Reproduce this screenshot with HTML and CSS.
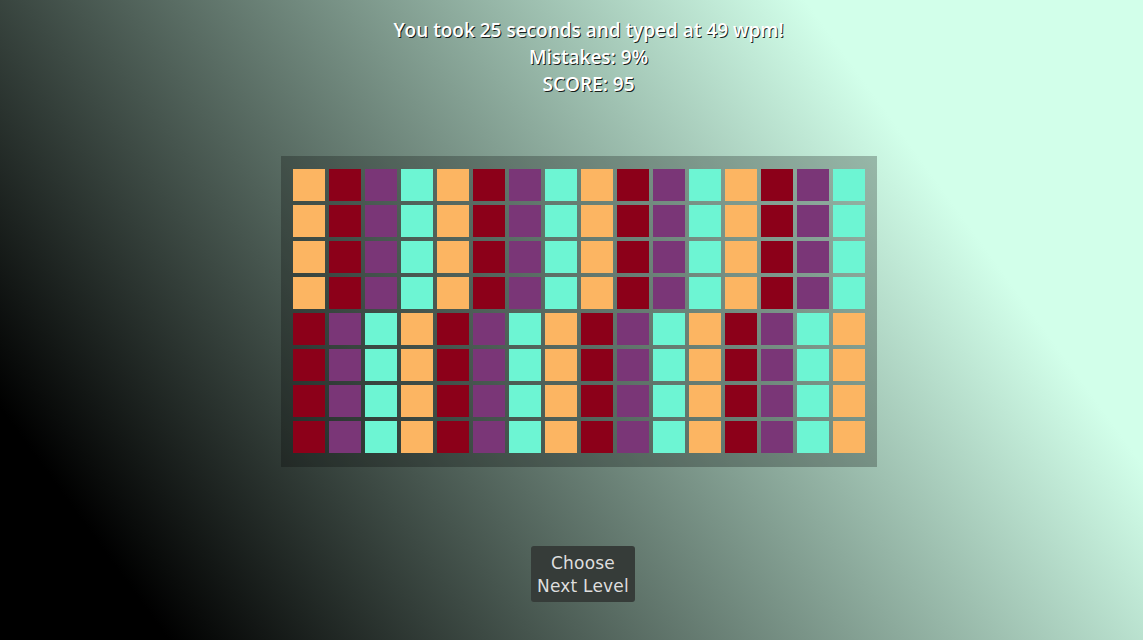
FILE: index.html
```html
<!DOCTYPE html>
<html>
<head>
<meta charset="utf-8">
<link rel="stylesheet" href="styles.css">
</head>
<body>
<div class="page">
  <div class="results">
    <div>You took 25 seconds and typed at 49 wpm!</div>
    <div>Mistakes: 9%</div>
    <div>SCORE: 95</div>
  </div>
  <div class="board">
    <div class="c o"></div><div class="c r"></div><div class="c p"></div><div class="c m"></div>
    <div class="c o"></div><div class="c r"></div><div class="c p"></div><div class="c m"></div>
    <div class="c o"></div><div class="c r"></div><div class="c p"></div><div class="c m"></div>
    <div class="c o"></div><div class="c r"></div><div class="c p"></div><div class="c m"></div>

    <div class="c o"></div><div class="c r"></div><div class="c p"></div><div class="c m"></div>
    <div class="c o"></div><div class="c r"></div><div class="c p"></div><div class="c m"></div>
    <div class="c o"></div><div class="c r"></div><div class="c p"></div><div class="c m"></div>
    <div class="c o"></div><div class="c r"></div><div class="c p"></div><div class="c m"></div>

    <div class="c o"></div><div class="c r"></div><div class="c p"></div><div class="c m"></div>
    <div class="c o"></div><div class="c r"></div><div class="c p"></div><div class="c m"></div>
    <div class="c o"></div><div class="c r"></div><div class="c p"></div><div class="c m"></div>
    <div class="c o"></div><div class="c r"></div><div class="c p"></div><div class="c m"></div>

    <div class="c o"></div><div class="c r"></div><div class="c p"></div><div class="c m"></div>
    <div class="c o"></div><div class="c r"></div><div class="c p"></div><div class="c m"></div>
    <div class="c o"></div><div class="c r"></div><div class="c p"></div><div class="c m"></div>
    <div class="c o"></div><div class="c r"></div><div class="c p"></div><div class="c m"></div>

    <div class="c r"></div><div class="c p"></div><div class="c m"></div><div class="c o"></div>
    <div class="c r"></div><div class="c p"></div><div class="c m"></div><div class="c o"></div>
    <div class="c r"></div><div class="c p"></div><div class="c m"></div><div class="c o"></div>
    <div class="c r"></div><div class="c p"></div><div class="c m"></div><div class="c o"></div>

    <div class="c r"></div><div class="c p"></div><div class="c m"></div><div class="c o"></div>
    <div class="c r"></div><div class="c p"></div><div class="c m"></div><div class="c o"></div>
    <div class="c r"></div><div class="c p"></div><div class="c m"></div><div class="c o"></div>
    <div class="c r"></div><div class="c p"></div><div class="c m"></div><div class="c o"></div>

    <div class="c r"></div><div class="c p"></div><div class="c m"></div><div class="c o"></div>
    <div class="c r"></div><div class="c p"></div><div class="c m"></div><div class="c o"></div>
    <div class="c r"></div><div class="c p"></div><div class="c m"></div><div class="c o"></div>
    <div class="c r"></div><div class="c p"></div><div class="c m"></div><div class="c o"></div>

    <div class="c r"></div><div class="c p"></div><div class="c m"></div><div class="c o"></div>
    <div class="c r"></div><div class="c p"></div><div class="c m"></div><div class="c o"></div>
    <div class="c r"></div><div class="c p"></div><div class="c m"></div><div class="c o"></div>
    <div class="c r"></div><div class="c p"></div><div class="c m"></div><div class="c o"></div>
  </div>
  <button class="next">Choose<br>Next Level</button>
</div>
</body>
</html>
```

FILE: styles.css
```css
html, body {
  margin: 0;
  padding: 0;
  height: 100%;
}
body {
  background: linear-gradient(54deg, #000 10.5%, #d2ffea 79%);
  overflow: hidden;
}
.page {
  display: flex;
  flex-direction: column;
  align-items: center;
  padding-top: 17px;
}
.results {
  padding-left: 34px;
  font-family: "Open Sans", sans-serif;
  font-weight: 600;
  font-size: 19px;
  line-height: 27px;
  color: #fff;
  text-align: center;
  text-shadow: 1px 1px 0 rgba(0, 0, 0, 0.85);
}
.board {
  margin-top: 58px;
  margin-left: 15px;
  display: grid;
  grid-template-columns: repeat(16, 32px);
  grid-auto-rows: 32px;
  gap: 4px;
  padding: 13px 12px 14px 12px;
  background: rgba(0, 0, 0, 0.25);
}
.c.o { background: #fcb562; }
.c.r { background: #8c0019; }
.c.p { background: #7a3677; }
.c.m { background: #6df5d3; }
.next {
  margin-top: 79px;
  margin-left: 23px;
  width: 104px;
  height: 56px;
  padding: 2px 0 0 0;
  border: none;
  border-radius: 3px;
  background: #363c39;
  color: #dedede;
  font-family: "DejaVu Sans", sans-serif;
  font-size: 17px;
  line-height: 23px;
  letter-spacing: 0.2px;
}
```
